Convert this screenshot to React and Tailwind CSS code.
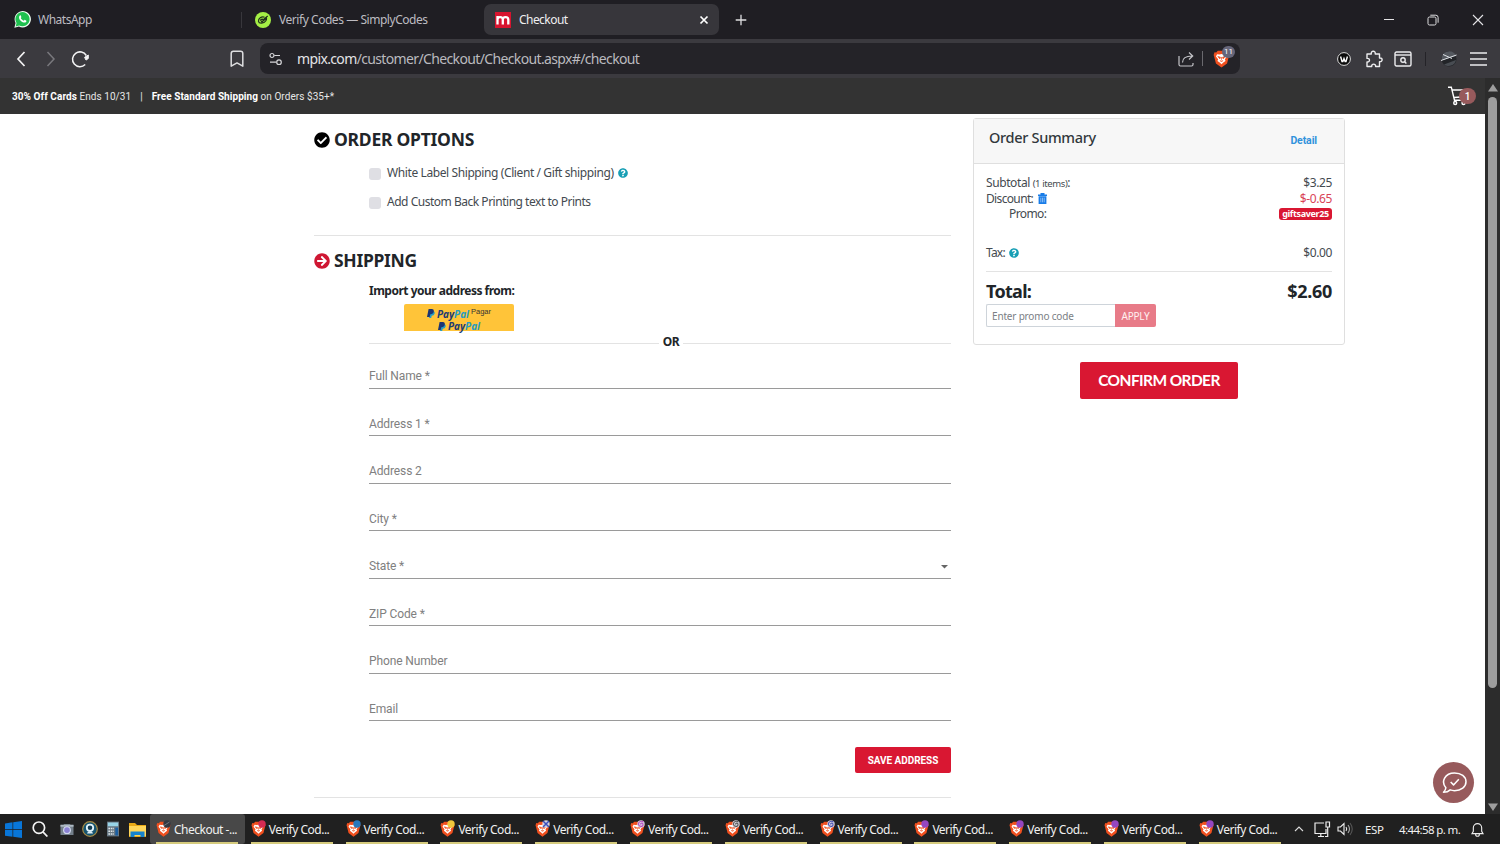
import React from "react";
import { FaCheckCircle, FaArrowCircleRight, FaQuestionCircle } from "react-icons/fa";

const UI = "font-['Noto_Sans','Open_Sans',sans-serif]";

function BraveIcon({ className = "" }) {
  return (
    <svg viewBox="0 0 20 22" className={"shrink-0 " + className}>
      <path d="M5.500 1h9l2 2 2-.2L19.600 6l-.6 2-2.200 8.500L10 21.500l-6.800-5L1 8 .4 6l1.100-3.200 2 .2z" fill="#f0501f" />
      <path d="M4.600 5.200 7.500 5.600 10 5l2.500.6 2.900-.4 1.400 2.600-2.700 3.400.8 2.300-2.700 1.800-2.200 2.200-2.200-2.200-2.700-1.800.8-2.300-2.700-3.400z" fill="#fff" />
      <path d="m5.500 8 3.200.8-.7 2zM14.500 8l-3.200.8.7 2zM10 8.500v3.500M8 13l2 1 2-1" fill="#f0501f" stroke="#f0501f" strokeWidth=".9" />
    </svg>
  );
}

function TabBar() {
  return (
    <div className="flex h-[39px] items-center bg-[#1f1e23] text-[12px] text-[#bdbcc1]">
      <div className="flex w-[242px] items-center pl-[14px]">
        <svg viewBox="0 0 24 24" className="h-[17px] w-[17px]">
          <path d="M.5 23.5 2.2 17A11.5 11.5 0 1 1 7 21.8z" fill="#f2fff5" />
          <path d="M2.3 21.8 3.6 17A10 10 0 1 1 7.3 20.4z" fill="#1fc04f" />
          <path d="M8.2 6.3c.6-.6 1-.5 1.3 0l.9 2c.2.4-.7 1.2-.8 1.5.8 1.8 2.200 3 4.200 3.900.4-.1 1-1.200 1.400-1.200l2.200 1.100c.4.300-.1 1.900-.8 2.300-2.900 1.800-9.400-2.600-9.500-6.900 0-1.100.4-2.100 1.100-2.700z" fill="#fff" />
        </svg>
        <span className="ml-[7px] tracking-[-0.5px]">WhatsApp</span>
      </div>
      <div className="flex w-[242px] items-center">
        <span className="-ml-px h-4 w-px bg-[#38373c]" />
        <svg viewBox="0 0 16 16" className="ml-[13px] h-4 w-4">
          <circle cx="8" cy="8" r="8" fill="#a4ef45" />
          <path d="M9.500 5.200C6.500 4.200 3.200 6.500 3.500 9.300c.4 2.700 5.500 2.200 7.200-.3.800-1 1-2 .8-2.800L6.900 9.900 5.600 8l1.500-.9.800.9 4.800-4" fill="none" stroke="#20301c" strokeWidth="1.200" />
        </svg>
        <span className="ml-[8px] tracking-[-0.45px]">Verify Codes — SimplyCodes</span>
      </div>
      <div className="flex h-[31px] w-[235px] items-center rounded-[7px] bg-[#37363b] pr-[10px] pl-[11px] text-[#efeff1]">
        <svg viewBox="0 0 16 16" className="h-4 w-4">
          <rect width="16" height="16" fill="#d8142f" />
          <path d="M2.500 12.500V4M2.500 7.500c0-3.300 5.300-3.300 5.300 0v5M7.800 7.500c0-3.300 5.500-3.300 5.500 0v5" fill="none" stroke="#fff" strokeWidth="2.300" />
        </svg>
        <span className="ml-[8px] grow tracking-[-0.55px]">Checkout</span>
        <svg viewBox="0 0 10 10" className="h-[10px] w-[10px]"><path d="M1.500 1.500l7 7m0-7l-7 7" stroke="#fff" strokeWidth="1.700" /></svg>
      </div>
      <svg viewBox="0 0 12 12" className="ml-[16px] h-3 w-3"><path d="M6 .7v10.600M.7 6h10.600" stroke="#dedee0" strokeWidth="1.300" /></svg>
      <div className="ml-auto flex items-center pr-[16px]">
        <svg viewBox="0 0 12 12" className="h-3 w-3"><path d="M1 5.500h10" stroke="#e4e4e6" /></svg>
        <svg viewBox="0 0 12 12" className="ml-[32px] h-3 w-3" fill="none" stroke="#dedee0"><rect x="1" y="3" width="8" height="8" rx="1.500" /><path d="M3.300 1.200h5.500a2.300 2.300 0 0 1 2.300 2.300v5.200" /></svg>
        <svg viewBox="0 0 12 12" className="ml-[33px] h-3 w-3"><path d="M1 1l10 10M11 1L1 11" stroke="#e4e4e6" strokeWidth="1.100" /></svg>
      </div>
    </div>
  );
}

function Toolbar() {
  return (
    <div className="flex h-[39px] items-center bg-[#3b3a3f]">
      <svg viewBox="0 0 10 16" className="ml-[16px] h-4 w-[10px]"><path d="M8.500 1 2 8l6.500 7" fill="none" stroke="#f3f3f4" strokeWidth="1.700" /></svg>
      <svg viewBox="0 0 10 16" className="ml-[20px] h-4 w-[10px]"><path d="M1.500 1 8 8l-6.500 7" fill="none" stroke="#79787d" strokeWidth="1.500" /></svg>
      <svg viewBox="0 0 18 18" className="ml-[15px] h-[18px] w-[18px]"><path d="M15.300 5.500A7.400 7.400 0 1 0 14.200 14.500" fill="none" stroke="#f3f3f4" strokeWidth="1.500" /><path d="M13.600 7.300 17.300 5v3.500l-2.300 1.600z" fill="#f3f3f4" stroke="#f3f3f4" /></svg>
      <svg viewBox="0 0 14 18" className="ml-[141px] h-[18px] w-[14px]"><path d="M1.200 3.500Q1.200 1.300 3.400 1.300h7.200q2.200 0 2.200 2.200v12.700L7 12.900l-5.800 3.300z" fill="none" stroke="#dedee0" strokeWidth="1.500" strokeLinejoin="round" /></svg>
      <div className="ml-[16px] flex h-[31px] w-[980px] items-center rounded-[8px] bg-[#242328]">
        <svg viewBox="0 0 14 14" className="ml-[9px] h-[14px] w-[14px]" fill="none" stroke="#d5d5d8" strokeWidth="1.200"><circle cx="3" cy="3.500" r="2" /><path d="M5.300 3.500H11M1 10.200h6" /><circle cx="10" cy="10.200" r="2.300" /></svg>
        <span className="ml-[14px] text-[14px] tracking-[-0.64px] text-[#bababf]"><span className="text-[#e3e3e6]">mpix.com</span>/customer/Checkout/Checkout.aspx#/checkout</span>
        <svg viewBox="0 0 16 16" className="ml-auto h-4 w-4" fill="none" stroke="#c5c5c9" strokeWidth="1.200"><path d="M1 5v8.500Q1 15 2.500 15h11q1.500 0 1.500-1.500V12M4.500 11.500Q4.500 5 14 5M11 1.500 14.700 5 11 8.500" /></svg>
        <span className="ml-[8px] h-[15px] w-px bg-[#6a696e]" />
        <span className="relative mr-[10px] ml-[10px] flex">
          <BraveIcon className="h-[18px] w-[17px]" />
          <span className="absolute -top-[4px] left-[9px] flex h-[12px] w-[13px] items-center justify-center rounded-full bg-[#66667a] font-['Roboto',sans-serif] text-[8px] text-white">11</span>
        </span>
      </div>
      <svg viewBox="0 0 14 14" className="ml-[97px] h-[14px] w-[14px]"><circle cx="7" cy="7" r="6.400" fill="#0b0b0b" stroke="#dcdcdc" /><path d="M3.600 4.500 5 9.500h.9L7 6.500l1.100 3H9l1.400-5" fill="none" stroke="#fff" strokeWidth="1.400" /></svg>
      <svg viewBox="0 0 18 18" className="ml-[14px] h-[18px] w-[18px]"><path d="M2 4h4.300C5.500.3 11 .3 10.200 4h4.300v4c3.500-.6 3.500 4.200 0 3.600V16.500H10.600c.5-3.200-4.400-3.200-3.900 0H2v-4.600c3.300.5 3.300-4 0-3.500z" fill="none" stroke="#ececee" strokeWidth="1.400" strokeLinejoin="round" /></svg>
      <svg viewBox="0 0 18 16" className="ml-[11px] h-4 w-[18px]" fill="none" stroke="#ececee" strokeWidth="1.400"><rect x="1" y="1" width="16" height="14" rx="1.500" /><path d="M1 4h16" /><circle cx="9" cy="9" r="2.200" /><path d="m10.600 10.700 1.800 1.800" /></svg>
      <span className="ml-[13px] h-[14px] w-px bg-[#242328]" />
      <svg viewBox="0 0 16 16" className="ml-[15px] h-4 w-4"><circle cx="8" cy="8" r="7.500" fill="#222428" /><path d="M.8 6A7.500 7.500 0 0 1 15 5L1 9z" fill="#54585f" /><path d="M0 9.500 15.500 4M2 3.500l9 4" stroke="#dde0e4" strokeWidth="1" /><path d="M3 13.500 15 9a7.500 7.500 0 0 1-12 4.500" fill="#484c52" /></svg>
      <svg viewBox="0 0 17 14" className="ml-[13px] h-[14px] w-[17px]"><path d="M0 1h17M0 7h17M0 13h17" stroke="#ececee" strokeWidth="1.300" /></svg>
    </div>
  );
}

function Banner() {
  return (
    <div className="flex h-[36px] items-center bg-[#333] pl-[12px] font-['Roboto',sans-serif] text-[10px] tracking-[0.06px] text-[#e6e6e6]">
      <span><b className="font-bold text-white">30% Off Cards</b> Ends 10/31</span>
      <span className="mx-[9px]">|</span>
      <span><b className="font-bold text-white">Free Standard Shipping</b> on Orders $35+*</span>
      <div className="relative mr-[9px] ml-auto h-[20px] w-[28px]">
        <svg viewBox="0 0 20 20" className="h-5 w-5" fill="none" stroke="#fff" strokeWidth="1.400"><path d="M0 1.200h3.300l3.200 13H17M4 4h14l-1.500 6.800-10.500.7" /><circle cx="7.200" cy="17" r="1.500" /><circle cx="15.500" cy="17" r="1.500" /></svg>
        <span className="absolute top-[2px] left-[11px] flex h-[16px] w-[17px] items-center justify-center rounded-full bg-[#975a5c] text-[10px] font-medium text-white">1</span>
      </div>
    </div>
  );
}

function Field({ label, select }) {
  return (
    <div className="flex h-[47.500px] items-end border-b border-[#9a9a9a]">
      <span className="mb-[2.500px] grow font-['Roboto',sans-serif] text-[12px] leading-[18px] tracking-[-0.12px] text-[#808080]">{label}</span>
      {select && <svg viewBox="0 0 7 4" className="mr-[3px] mb-[9px] h-[4px] w-[7px]"><path d="M0 0h7L3.500 3.500z" fill="#666" /></svg>}
    </div>
  );
}

function Check({ children }) {
  return (
    <div className="flex h-[29px] items-center pl-[55px] text-[12px] text-[#444a50]">
      <span className="mt-[2px] mr-[6px] h-[12px] w-[12px] rounded-[3px] bg-[#dfdfe4]" />
      {children}
    </div>
  );
}

function PayPalMark() {
  return (
    <>
      <svg viewBox="0 0 9 10" className="mr-[2px] h-[9px] w-[8px]"><path d="M3.500 2.500h3.700q2 .6 1.300 2.700Q7.900 7.500 5.300 7.500L4.700 10H2.300z" fill="#259bc5" /><path d="M1.800 0h4q2.400.4 1.900 2.700Q7.100 5.800 3.700 5.800L3 9H0z" fill="#1b3474" /></svg>
      <span className="font-['Open_Sans',sans-serif] text-[10px] leading-none font-bold tracking-[-0.05px] italic"><span className="text-[#213a72]">Pay</span><span className="text-[#259bc5]">Pal</span></span>
    </>
  );
}

function Checkout() {
  return (
    <div className="w-[637px]">
      <h2 className="mt-[13px] flex h-[24px] items-center text-[17.500px] font-bold text-[#212529]">
        <FaCheckCircle className="mt-[2px] mr-[4px] h-4 w-4 text-black" /><span className="tracking-[-0.25px]">ORDER OPTIONS</span>
      </h2>
      <div className="mt-[7px]">
        <Check><span className="tracking-[-0.4px]">White Label Shipping (Client / Gift shipping)</span><FaQuestionCircle className="ml-[4px] h-[10px] w-[10px] text-[#189fb5]" /></Check>
        <Check><span className="tracking-[-0.48px]">Add Custom Back Printing text to Prints</span></Check>
      </div>
      <div className="mt-[19px] h-px bg-[#e3e3e3]" />
      <h2 className="mt-[12px] flex h-[24px] items-center text-[17.500px] font-bold text-[#212529]">
        <FaArrowCircleRight className="mt-[2px] mr-[4px] h-4 w-4 text-[#cf1733]" /><span className="tracking-[-0.3px]">SHIPPING</span>
      </h2>
      <div className="pl-[55px]">
        <p className="mt-[10px] text-[12px] leading-[18px] font-bold tracking-[-0.5px] text-[#212529]">Import your address from:</p>
        <div className="mt-[4px] ml-[35px] h-[27px] w-[110px] rounded-t-[2px] bg-[#ffc439]">
          <div className="flex h-[17px] items-center justify-center pt-[2px]"><PayPalMark /><span className="mb-[4px] ml-[2px] font-['Liberation_Sans',sans-serif] text-[7.500px] text-[#333]">Pagar</span></div>
          <div className="flex h-[10px] items-center justify-center"><PayPalMark /></div>
        </div>
        <div className="mt-[2px] flex h-[18px] items-center">
          <span className="mt-[3px] h-px w-[290px] bg-[#e3e3e3]" /><b className="w-[24px] text-center text-[12px] tracking-[-0.5px] text-[#212529]">OR</b><span className="mt-[3px] h-px grow bg-[#e3e3e3]" />
        </div>
        <div className="-mt-[10px]">
          <Field label="Full Name *" /><Field label="Address 1 *" /><Field label="Address 2" /><Field label="City *" />
          <Field label="State *" select /><Field label="ZIP Code *" /><Field label="Phone Number" /><Field label="Email" />
        </div>
        <button className="mt-[26px] ml-auto flex h-[26px] w-[96px] items-center justify-center rounded-[2px] bg-[#d91732] font-['Roboto',sans-serif] text-[10px] font-bold tracking-[-0.05px] text-white">SAVE ADDRESS</button>
      </div>
      <div className="mt-[24px] h-px bg-[#e3e3e3]" />
    </div>
  );
}

function Row({ label, children, className = "" }) {
  return <div className={"flex items-center justify-between " + className}><span className="flex items-center">{label}</span>{children}</div>;
}

function Summary() {
  return (
    <div className="mt-[4px] ml-[22px] w-[372px]">
      <div className="h-[227px] rounded-[3px] border border-[#dfdfdf] bg-white text-[12px] text-[#444a50]">
        <div className="flex h-[45px] items-center justify-between border-b border-[#dfdfdf] bg-[#f7f7f7] pr-[27px] pl-[15px]">
          <span className="-mt-[7px] text-[14.500px] font-medium tracking-[-0.32px] text-[#32373c]">Order Summary</span>
          <span className="font-['Roboto',sans-serif] text-[10.500px] font-bold tracking-[-0.1px] text-[#3092dc]">Detail</span>
        </div>
        <div className="pt-[11px] pr-[12px] pl-[12px] tracking-[-0.4px]">
          <Row className="h-4" label={<span>Subtotal <span className="text-[9.500px]">(1 items)</span>:</span>}><span>$3.25</span></Row>
          <Row className="h-[15px]" label={<><span className="tracking-[-0.65px]">Discount:</span><svg viewBox="0 0 9 11" className="ml-[5px] h-[11px] w-[9px]"><path d="M0 1.500h2.500V0h4v1.500H9V3H0zM.6 3.200h7.800V11H.6z" fill="#187ce8" /><path d="M2.800 4.700v4.600m1.700-4.600v4.600m1.700-4.600v4.600" stroke="#cde3fc" strokeWidth=".6" /></svg></>}><span className="text-[#d94357]">$-0.65</span></Row>
          <Row className="h-[15px] pl-[23px]" label={<span className="tracking-[-0.6px]">Promo:</span>}><span className="flex h-[12px] w-[53px] items-center justify-center rounded-[3px] bg-[#d91732] text-[9px] font-bold tracking-[-0.35px] text-white">giftsaver25</span></Row>
          <Row className="mt-[24px] h-4" label={<><span className="tracking-[-0.8px]">Tax:</span><FaQuestionCircle className="ml-[4px] h-[10px] w-[10px] text-[#189fb5]" /></>}><span>$0.00</span></Row>
          <div className="mt-[10px] h-px bg-[#e3e3e3]" />
          <Row className="mt-[7px] h-6 text-[18px] font-bold text-[#212529]" label={<span className="tracking-[-0.7px]">Total:</span>}><span className="tracking-[-0.3px]">$2.60</span></Row>
          <div className="mt-px flex h-[23px] w-[170px] text-[10px] tracking-normal">
            <div className="flex w-[129px] items-center rounded-l-[2px] border border-r-0 border-[#ced4da] pt-px pl-[5px] tracking-[-0.18px] text-[#7b8085]">Enter promo code</div>
            <div className="flex w-[41px] items-center justify-center rounded-r-[2px] bg-[#e87b88] pt-px tracking-[-0.2px] text-[#fff0f0]">APPLY</div>
          </div>
        </div>
      </div>
      <button className="mt-[17px] ml-[107px] flex h-[37px] w-[158px] items-center justify-center rounded-[2px] bg-[#d91732] font-['Lato',sans-serif] text-[15.500px] font-bold tracking-[-0.6px] text-white">CONFIRM ORDER</button>
    </div>
  );
}

const TASKS = ["#333842", "#d52b53", "#2878bd", "#f0c63c", "#3b50bd", "#b74bc4", "#555", "#4c51b5", "#9546c0", "#9546c0", "#9546c0", "#9546c0"];

function Taskbar() {
  return (
    <div className="flex h-[30px] items-center overflow-hidden bg-[#202020] text-[12px] text-[#f0f0f0]">
      <svg viewBox="0 0 17 17" className="ml-[5px] h-[17px] w-[17px]"><path d="M0 2.400 7.500 1.300V8.200H0zM8.200 1.200 17 0v8.200H8.200zM0 8.900h7.500v6.800L0 14.700zM8.200 8.900H17V17l-8.800-1.200z" fill="#0876d9" /></svg>
      <svg viewBox="0 0 16 16" className="ml-[10px] h-4 w-4" fill="none" stroke="#f4f4f4" strokeWidth="1.700"><circle cx="6.900" cy="6.700" r="5.700" /><path d="m10.900 10.800 4.500 4.700" /></svg>
      <svg viewBox="0 0 16 14" className="ml-[11px] h-[13px] w-4"><path d="M1 2h3l1-1h6l1 1h3v11H1z" fill="#74808b" /><path d="M1 2h14v2H1z" fill="#aeb9c2" /><circle cx="8" cy="7.700" r="4.200" fill="#d3d9ee" /><circle cx="8" cy="7.700" r="3" fill="#8b82d4" /></svg>
      <svg viewBox="0 0 16 16" className="ml-[7px] h-4 w-4"><circle cx="8" cy="8" r="7.300" fill="#165470" stroke="#a58a45" strokeWidth="1.200" /><circle cx="8" cy="6.800" r="3.200" fill="#143c52" stroke="#e0f3fb" strokeWidth="1.800" /><path d="M5 12.500h6l-1-2H6z" fill="#dcecf3" /></svg>
      <svg viewBox="0 0 13 16" className="ml-[9px] h-4 w-[12px]"><path d="M0 0h13v16H0z" fill="#697985" /><path d="M1 1h11v4H1z" fill="#98d4e7" /><path d="M1.500 7.500h6m-6 3h6m-6 3h6" stroke="#e1e8eb" strokeWidth="1.700" strokeDasharray="1.800 .8" /><path d="M9 6.500h3V15H9z" fill="#1b5fa2" /></svg>
      <svg viewBox="0 0 17 15" className="ml-[10px] h-[15px] w-[17px]"><path d="M0 1h6l2 2h9v12H0z" fill="#e9a916" /><path d="M0 4h17v10H0z" fill="#ffd65a" /><path d="M1.500 9.500h14V15h-4v-2h-6v2h-4z" fill="#1683cd" /></svg>
      <div className="ml-[4px] flex w-[1139px]">
        {TASKS.map((c, i) => (
          <div key={i} className={"relative flex h-[30px] w-[94.800px] shrink-0 items-center pl-[6px] " + (i === 0 ? "rounded-[3px] bg-[#484848]" : "")}>
            <span className="relative flex">
              <BraveIcon className="h-[16px] w-[15px]" />
              <svg viewBox="0 0 8 8" className="absolute -top-px left-[7px] h-[8px] w-[8px]">
                <circle cx="4" cy="4" r="3.700" fill={i >= 4 && i <= 7 ? "#d3d2dd" : c} />
                {i === 4 && <path d="m1 1 6 6m0-6L1 7" stroke={c} strokeWidth="1.500" />}
                {i >= 5 && i < 8 && <path d="M6.500 2C4 .2 1 2 1.500 4.500S6 7 6 4.700 3.500 2.800 3.600 4.500" fill="none" stroke={c} strokeWidth="1.100" />}
                {i === 0 && <path d="M1 5.500 6.500 2" stroke="#8a8f96" strokeWidth=".7" />}
              </svg>
            </span>
            <span className="mt-px ml-[3px] tracking-[-0.5px] whitespace-nowrap">{i === 0 ? "Checkout -..." : "Verify Cod..."}</span>
            <span className="absolute bottom-0 left-[6px] h-[2px] w-[82px] bg-[#d5cb7d]" />
          </div>
        ))}
      </div>
      <svg viewBox="0 0 10 6" className="ml-[5px] h-[6px] w-[10px]"><path d="m1 5 4-4 4 4" fill="none" stroke="#ddd" strokeWidth="1.100" /></svg>
      <svg viewBox="0 0 17 17" className="ml-[10px] h-[17px] w-[17px]" fill="none" stroke="#eee" strokeWidth="1.200"><path d="M10 2H1v10.500h11V8M4 15.500h6M6.800 12.500v3M12 1h3.500v5H12zM13.700 6v9.500H11" /></svg>
      <svg viewBox="0 0 16 14" className="ml-[6px] h-[14px] w-4" fill="none" stroke="#eee" strokeWidth="1.100"><path d="M1 5h2.500L7 1.500v11L3.500 9H1z" /><path d="M9 5q1.500 2 0 4" /><path d="M11 3q3 4 0 8" stroke="#aaa" /><path d="M13 1q4.500 6 0 12" stroke="#555" /></svg>
      <span className="mt-px ml-[12px] w-[20px] text-[11.500px] tracking-[-0.4px]">ESP</span>
      <span className="mt-px ml-[14px] w-[61px] text-[11.500px] tracking-[-0.6px] whitespace-nowrap">4:44:58 p. m.</span>
      <svg viewBox="0 0 14 16" className="ml-[11px] h-[15px] w-[13px]" fill="none" stroke="#eee" strokeWidth="1.200"><path d="M1 12.500h12l-1.500-2.500V6.200a4.500 4.500 0 0 0-9 0V10zM5 13q0 2.300 2 2.300T9 13" /></svg>
    </div>
  );
}

export default function App() {
  return (
    <div className={"flex h-[844px] w-[1500px] flex-col overflow-hidden bg-white " + UI}>
      <TabBar />
      <Toolbar />
      <div className="flex h-[736px]">
        <div className="relative w-[1485px]">
          <Banner />
          <main className="flex items-start pl-[314px]"><Checkout /><Summary /></main>
          <div className="absolute right-[11px] bottom-[11px] flex h-[41px] w-[41px] items-center justify-center rounded-full bg-[#975a5c]">
            <svg viewBox="0 0 27 24" className="ml-[2px] h-[23px] w-[27px]" fill="none" stroke="#fff" strokeWidth="1.600" strokeLinejoin="round"><path d="M4.500 17.500C-1 11 3.500 2 13.500 2 20.500 2 25.500 6 25.500 11.300S20.500 20.500 13.500 20.500q-2.500 0-4.500-.8-2.500 2.500-7 2.500 2.200-2 2.500-4.700z" /><path d="m9.500 11.500 3 3 5.500-6" /></svg>
          </div>
        </div>
        <div className="flex w-[15px] flex-col items-center bg-[#2c2c2c]">
          <svg viewBox="0 0 10 8" className="mt-[6px] h-[8px] w-[10px]"><path d="M5 0 10 7.500H0z" fill="#9d9d9d" /></svg>
          <span className="mt-[5px] h-[591px] w-[9px] rounded-full bg-[#9d9d9d]" />
          <svg viewBox="0 0 10 8" className="mt-auto mb-[3px] h-[8px] w-[10px]"><path d="M5 8 10 .5H0z" fill="#9d9d9d" /></svg>
        </div>
      </div>
      <Taskbar />
    </div>
  );
}
